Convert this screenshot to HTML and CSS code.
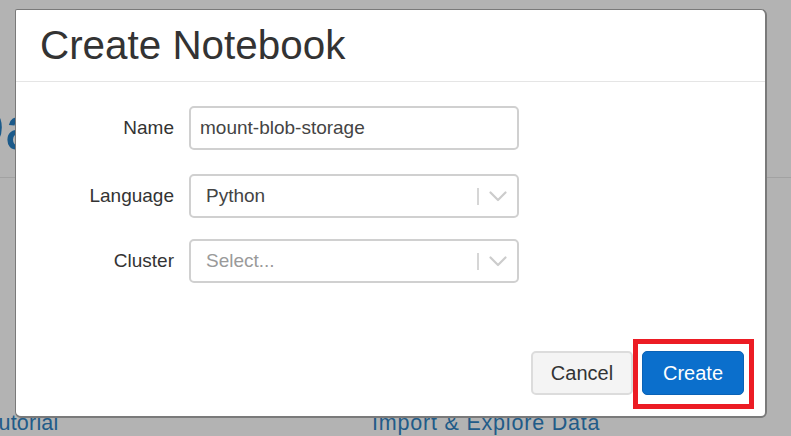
FILE: index.html
```html
<!DOCTYPE html>
<html lang="en">
<head>
<meta charset="utf-8">
<title>Create Notebook</title>
<link rel="stylesheet" href="styles.css">
</head>
<body>
  <div class="page">
    <h1 class="page-title">Data</h1>
    <div class="page-rule"></div>
    <div class="page-links">
      <a class="page-link page-link--tutorial">Tutorial</a>
      <a class="page-link page-link--import">Import &amp; Explore Data</a>
    </div>
  </div>

  <div class="modal">
    <div class="modal-header">
      <h2 class="modal-title">Create Notebook</h2>
    </div>
    <div class="modal-body">
      <div class="form-row form-row--name">
        <label class="form-label">Name</label>
        <div class="text-input">mount-blob-storage</div>
      </div>
      <div class="form-row">
        <label class="form-label">Language</label>
        <div class="select-input">
          <span class="select-value">Python</span>
          <span class="select-sep"></span>
          <svg class="select-arrow" width="18" height="11" viewBox="0 0 18 11"><polyline points="1.5,1.5 9,9 16.5,1.5" fill="none" stroke="#cccccc" stroke-width="2.2" stroke-linecap="round" stroke-linejoin="round"/></svg>
        </div>
      </div>
      <div class="form-row">
        <label class="form-label">Cluster</label>
        <div class="select-input">
          <span class="select-value select-value--placeholder">Select...</span>
          <span class="select-sep"></span>
          <svg class="select-arrow" width="18" height="11" viewBox="0 0 18 11"><polyline points="1.5,1.5 9,9 16.5,1.5" fill="none" stroke="#cccccc" stroke-width="2.2" stroke-linecap="round" stroke-linejoin="round"/></svg>
        </div>
      </div>
    </div>
    <div class="modal-footer">
      <button class="btn btn--default">Cancel</button>
      <span class="highlight">
        <button class="btn btn--primary">Create</button>
      </span>
    </div>
  </div>
</body>
</html>
```

FILE: styles.css
```css
html, body {
  margin: 0;
  padding: 0;
}

body {
  width: 791px;
  height: 436px;
  overflow: hidden;
  background: #b3b3b3;
  font-family: "Liberation Sans", Arial, sans-serif;
  position: relative;
}

/* dimmed page behind the dialog */
.page {
  display: flex;
  flex-direction: column;
}

.page-title {
  margin: 97px 0 0 -40px;
  font-size: 62px;
  line-height: 1;
  font-weight: normal;
  color: #1b5a8a;
}

.page-rule {
  margin-top: 18px;
  height: 1px;
  background: #a2a2a2;
}

.page-links {
  display: flex;
  margin-top: 235px;
  padding-left: 0;
}

.page-link {
  font-size: 21.5px;
  letter-spacing: 0.8px;
  line-height: 1;
  color: #215b88;
}

.page-link--tutorial {
  margin-left: -14px;
  width: 386px;
  letter-spacing: 0.2px;
}

/* dialog */
.modal {
  position: absolute;
  left: 15px;
  top: 9px;
  width: 752px;
  height: 409px;
  box-sizing: border-box;
  background: #ffffff;
  border-style: solid;
  border-color: #7a7a7a;
  border-width: 1px 2px 2px 1px;
  border-radius: 2px 6px 6px 6px;
  display: flex;
  flex-direction: column;
}

.modal-header {
  height: 72px;
  box-sizing: border-box;
  padding: 15px 24px 0;
  border-bottom: 1px solid #e5e5e5;
}

.modal-title {
  margin: 0;
  font-size: 40.4px;
  line-height: 1;
  font-weight: normal;
  color: #333333;
}

.modal-body {
  flex: 1;
  padding-top: 24px;
}

.form-row {
  display: flex;
  align-items: center;
  margin-top: 21px;
}

.form-row--name {
  margin-top: 0;
}

.form-row--name + .form-row {
  margin-top: 24px;
}

.form-label {
  width: 158px;
  margin-right: 15px;
  text-align: right;
  font-size: 19px;
  color: #333333;
}

.text-input,
.select-input {
  width: 330px;
  height: 44px;
  box-sizing: border-box;
  border: 2px solid #d0d0d0;
  border-radius: 5px;
  font-size: 19px;
  color: #444444;
  display: flex;
  align-items: center;
}

.text-input {
  padding-left: 9px;
}

.select-input {
  padding-left: 15px;
  padding-right: 10px;
}

.select-value {
  flex: 1;
}

.select-value--placeholder {
  color: #9a9a9a;
}

.select-sep {
  width: 2px;
  height: 17px;
  background: #d6d6d6;
  margin-right: 10px;
}

.select-arrow {
  display: block;
}

.modal-footer {
  display: flex;
  justify-content: flex-end;
  align-items: center;
  gap: 9px;
  padding: 0 21px 21px 0;
}

.btn {
  width: 102px;
  height: 44px;
  box-sizing: border-box;
  border-radius: 5px;
  font-family: "Liberation Sans", Arial, sans-serif;
  font-size: 20px;
  padding: 0;
  cursor: pointer;
}

.btn--default {
  background: #f4f4f4;
  border: 2px solid #dcdcdc;
  color: #333333;
}

.btn--primary {
  display: block;
  background: #0b6fcc;
  border: 1px solid #0a62b6;
  color: #ffffff;
}

.highlight {
  position: relative;
  display: block;
}

.highlight::after {
  content: "";
  position: absolute;
  left: -9px;
  right: -10px;
  top: -12px;
  bottom: -14px;
  border: 5px solid #ec1c24;
  pointer-events: none;
}
```
